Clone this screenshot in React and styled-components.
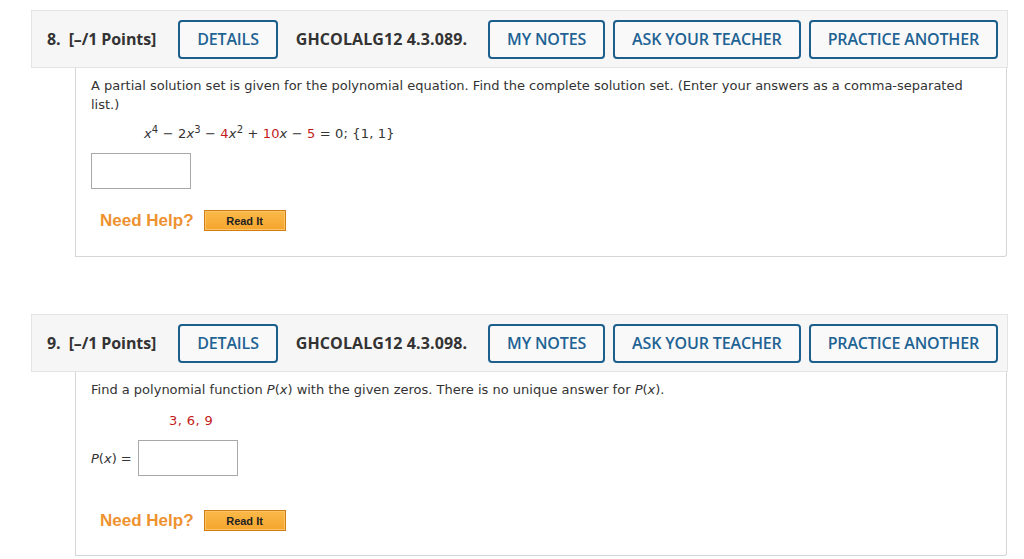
import React from 'react'
import styled, { createGlobalStyle } from 'styled-components'

const GlobalStyle = createGlobalStyle`
  body {
    margin: 0;
    background: #fff;
    font-family: "DejaVu Sans", Verdana, sans-serif;
  }
  * {
    box-sizing: border-box;
  }
`

export default function App() {
  return (
    <Page>
      <GlobalStyle />
      <Question>
        <Header number="8." code="GHCOLALG12 4.3.089." />
        <Body $height={189}>
          <Prompt>
            A partial solution set is given for the polynomial equation. Find the complete solution set. (Enter your answers as a comma-separated list.)
          </Prompt>
          <Equation>
            <i>x</i><sup>4</sup> − 2<i>x</i><sup>3</sup> − <Red>4</Red><i>x</i><sup>2</sup> + <Red>10</Red><i>x</i> − <Red>5</Red> = 0; {'{'}1, 1{'}'}
          </Equation>
          <AnswerRow>
            <AnswerBox />
          </AnswerRow>
          <Help gap={21} />
        </Body>
      </Question>

      <Question>
        <Header number="9." code="GHCOLALG12 4.3.098." />
        <Body $height={184}>
          <Prompt>
            Find a polynomial function <i>P</i>(<i>x</i>) with the given zeros. There is no unique answer for <i>P</i>(<i>x</i>).
          </Prompt>
          <Zeros>3, 6, 9</Zeros>
          <AnswerRow>
            <Label><i>P</i>(<i>x</i>) = </Label>
            <AnswerBox />
          </AnswerRow>
          <Help gap={34} />
        </Body>
      </Question>
    </Page>
  )
}

function Header({ number, code }) {
  return (
    <Bar>
      <Points>{number}&nbsp; [–/1 Points]</Points>
      <ActionButton>DETAILS</ActionButton>
      <Code>{code}</Code>
      <ActionButton>MY NOTES</ActionButton>
      <ActionButton>ASK YOUR TEACHER</ActionButton>
      <ActionButton>PRACTICE ANOTHER</ActionButton>
    </Bar>
  )
}

function Help({ gap }) {
  return (
    <HelpRow $gap={gap}>
      <NeedHelp>Need Help?</NeedHelp>
      <ReadIt>Read It</ReadIt>
    </HelpRow>
  )
}

const Page = styled.div`
  padding: 10px 16px 0 31px;
  width: 1024px;
  display: flex;
  flex-direction: column;
  gap: 57px;
`
const Question = styled.div`
  display: flex;
  flex-direction: column;
`
const Bar = styled.div`
  height: 58px;
  display: flex;
  align-items: center;
  padding: 0 10px 0 15px;
  background: #f6f6f6;
  border: 1px solid #e4e4e4;
  font-family: "Open Sans", sans-serif;
  color: #333;
  white-space: nowrap;
  & > * {
    flex-shrink: 0;
  }
`
const Points = styled.span`
  font-size: 16px;
  font-weight: 700;
  margin-right: 22px;
  letter-spacing: -0.1px;
`
const Code = styled.span`
  font-size: 16px;
  font-weight: 700;
  margin: 0 21px 0 10px;
  letter-spacing: 0.1px;
`
const ActionButton = styled.button`
  height: 39px;
  padding: 0 17px;
  margin-right: 8px;
  background: #f9f9f9;
  border: 2px solid #1c5f8d;
  border-radius: 4px;
  font-family: "Open Sans", sans-serif;
  font-size: 16px;
  font-weight: 600;
  letter-spacing: -0.15px;
  color: #1f6394;
  cursor: pointer;
  &:last-child {
    margin-right: 0;
  }
`
const Body = styled.div`
  margin-left: 44px;
  margin-right: 1px;
  padding: 8px 15px 0;
  height: ${p => p.$height}px;
  border: 1px solid #d6d6d6;
  border-top: none;
  border-bottom-right-radius: 3px;
  display: flex;
  flex-direction: column;
  font-size: 13px;
  color: #333;
  sup {
    font-size: 10px;
    line-height: 0;
  }
`
const Prompt = styled.p`
  margin: 0;
  line-height: 19px;
`
const Red = styled.span`
  color: #c41a1a;
`
const Equation = styled.div`
  margin: 10px 0 0 53px;
  line-height: 20px;
  letter-spacing: 0.15px;
`
const Zeros = styled.div`
  margin: 14px 0 3px 78px;
  color: #c41a1a;
  letter-spacing: 0.4px;
`
const AnswerRow = styled.div`
  display: flex;
  align-items: center;
  margin-top: 9px;
`
const Label = styled.span`
  margin-right: 6px;
`
const AnswerBox = styled.div`
  width: 100px;
  height: 36px;
  border: 1px solid #a8a8a8;
  background: #fff;
`
const HelpRow = styled.div`
  display: flex;
  align-items: center;
  margin: ${p => p.$gap}px 0 0 9px;
`
const NeedHelp = styled.span`
  font-family: "Liberation Sans", Arial, sans-serif;
  font-size: 17px;
  font-weight: 700;
  color: #ee922f;
  margin-right: 10px;
`
const ReadIt = styled.button`
  width: 82px;
  height: 21px;
  padding: 0;
  background: linear-gradient(#fbb94a, #f5a52d);
  border: 1px solid #d27c12;
  box-shadow: inset 0 0 0 1px #fcc56a;
  font-family: "Liberation Sans", Arial, sans-serif;
  font-size: 11px;
  font-weight: 700;
  color: #222;
  cursor: pointer;
`
